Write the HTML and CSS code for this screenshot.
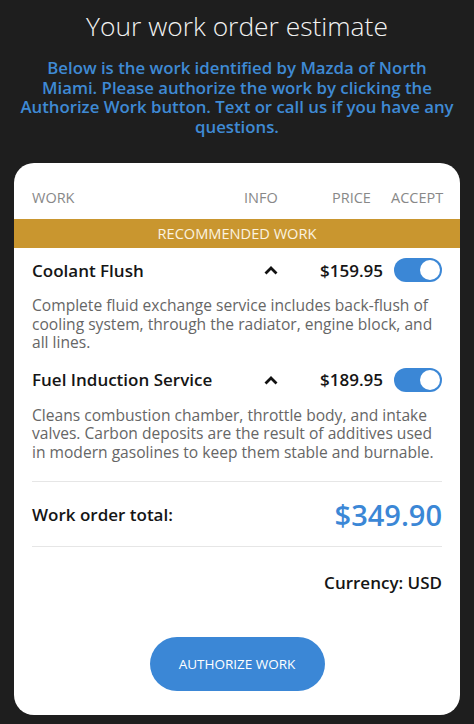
FILE: index.html
```html
<!DOCTYPE html>
<html>
<head>
<meta charset="utf-8">
<link rel="stylesheet" href="styles.css">
</head>
<body>
<div class="page">
  <h1 class="title">Your work order estimate</h1>
  <p class="intro">Below is the work identified by Mazda of North Miami. Please authorize the work by clicking the Authorize Work button. Text or call us if you have any questions.</p>
  <div class="card">
    <div class="head">
      <span class="h-work">WORK</span>
      <span class="h-info">INFO</span>
      <span class="h-price">PRICE</span>
      <span class="h-accept">ACCEPT</span>
    </div>
    <div class="band">RECOMMENDED WORK</div>
    <div class="items">
      <div class="item">
        <div class="row">
          <span class="name">Coolant Flush</span>
          <svg class="chev" width="14" height="10" viewBox="0 0 14 10"><polyline points="1.5,8.5 7,3 12.5,8.5" fill="none" stroke="#111" stroke-width="2.8"/></svg>
          <span class="price">$159.95</span>
          <span class="toggle"><span class="knob"></span></span>
        </div>
        <p class="desc">Complete fluid exchange service includes back-flush of cooling system, through the radiator, engine block, and all lines.</p>
      </div>
      <div class="item">
        <div class="row">
          <span class="name">Fuel Induction Service</span>
          <svg class="chev" width="14" height="10" viewBox="0 0 14 10"><polyline points="1.5,8.5 7,3 12.5,8.5" fill="none" stroke="#111" stroke-width="2.8"/></svg>
          <span class="price">$189.95</span>
          <span class="toggle"><span class="knob"></span></span>
        </div>
        <p class="desc">Cleans combustion chamber, throttle body, and intake valves. Carbon deposits are the result of additives used in modern gasolines to keep them stable and burnable.</p>
      </div>
    </div>
    <div class="total">
      <span class="total-label">Work order total:</span>
      <span class="total-value">$349.90</span>
    </div>
    <div class="currency">Currency: USD</div>
    <div class="actions">
      <button class="authorize">AUTHORIZE WORK</button>
    </div>
  </div>
</div>
</body>
</html>
```
FILE: styles.css
```css
* { box-sizing: border-box; }
html, body {
  margin: 0;
  padding: 0;
  background: #1e1e1e;
}
body {
  font-family: "Open Sans", "Noto Sans", sans-serif;
  width: 474px;
  height: 724px;
  overflow: hidden;
}
.page {
  padding-top: 8px;
}
.title {
  margin: 0;
  font-size: 26.4px;
  font-weight: 300;
  line-height: 36px;
  color: #f2f2f2;
  text-align: center;
}
.intro {
  margin: 14px 18px 0;
  font-size: 16.8px;
  font-weight: 600;
  line-height: 19.5px;
  color: #3f8ad4;
  text-align: center;
}
.card {
  margin: 27px 14px 0;
  background: #fff;
  border-radius: 20px;
  padding-bottom: 24px;
}
.head {
  height: 56px;
  display: flex;
  align-items: flex-end;
  padding: 0 16px 11px 18px;
  font-size: 14.5px;
  line-height: 20px;
  color: #888;
}
.h-work { flex: 1; }
.h-info { width: 88px; }
.h-price { width: 59px; }
.h-accept { width: 53px; }
.band {
  height: 29px;
  background: #c9962f;
  color: #fbf3e0;
  font-size: 14.6px;
  line-height: 29px;
  text-align: center;
}
.items {
  padding: 10px 18px 0;
}
.item + .item { margin-top: 16px; }
.row {
  display: flex;
  align-items: center;
  height: 24px;
}
.name {
  flex: 1;
  font-size: 17px;
  font-weight: 600;
  color: #151515;
}
.chev {
  display: block;
  margin-right: 25px;
}
.price {
  width: 80px;
  text-align: right;
  font-size: 17px;
  font-weight: 600;
  color: #151515;
}
.toggle {
  margin-left: 11px;
  width: 48px;
  height: 24px;
  border-radius: 12px;
  background: #3b87d6;
  display: flex;
  justify-content: flex-end;
  align-items: center;
  padding: 2px;
}
.knob {
  width: 20px;
  height: 20px;
  border-radius: 50%;
  background: #fff;
}
.desc {
  margin: 14px 0 0;
  font-size: 15.6px;
  line-height: 18.5px;
  color: #666;
}
.total {
  margin: 20px 18px 0;
  height: 66px;
  border-top: 1px solid #e6e6e6;
  border-bottom: 1px solid #e6e6e6;
  display: flex;
  align-items: center;
  justify-content: space-between;
}
.total-label {
  font-size: 17px;
  font-weight: 600;
  color: #151515;
}
.total-value {
  font-size: 29px;
  font-weight: 600;
  color: #3b87d6;
}
.currency {
  margin: 24px 18px 0;
  text-align: right;
  font-size: 17px;
  font-weight: 600;
  line-height: 24px;
  color: #151515;
}
.actions {
  display: flex;
  justify-content: center;
  margin-top: 42px;
}
.authorize {
  width: 175px;
  height: 54px;
  border: none;
  border-radius: 27px;
  background: #3b87d6;
  color: #fff;
  font-family: "Open Sans", "Noto Sans", sans-serif;
  font-size: 13.5px;
  font-weight: 400;
  padding: 0;
}
```
